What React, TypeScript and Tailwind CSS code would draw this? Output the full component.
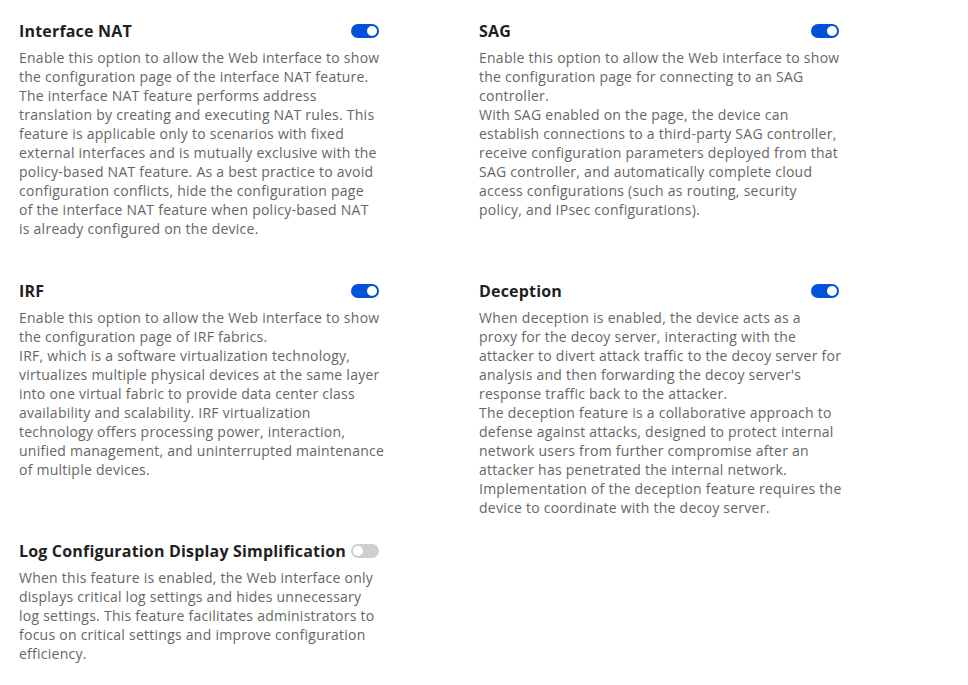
import { useState } from 'react';

type Feature = {
  id: string;
  title: string;
  enabled: boolean;
  lines: string[];
};

const features: Feature[] = [
  {
    id: 'nat',
    title: 'Interface NAT',
    enabled: true,
    lines: [
      'Enable this option to allow the Web interface to show',
      'the configuration page of the interface NAT feature.',
      'The interface NAT feature performs address',
      'translation by creating and executing NAT rules. This',
      'feature is applicable only to scenarios with fixed',
      'external interfaces and is mutually exclusive with the',
      'policy-based NAT feature. As a best practice to avoid',
      'configuration conflicts, hide the configuration page',
      'of the interface NAT feature when policy-based NAT',
      'is already configured on the device.'
    ]
  },
  {
    id: 'sag',
    title: 'SAG',
    enabled: true,
    lines: [
      'Enable this option to allow the Web interface to show',
      'the configuration page for connecting to an SAG',
      'controller.',
      'With SAG enabled on the page, the device can',
      'establish connections to a third-party SAG controller,',
      'receive configuration parameters deployed from that',
      'SAG controller, and automatically complete cloud',
      'access configurations (such as routing, security',
      'policy, and IPsec configurations).'
    ]
  },
  {
    id: 'irf',
    title: 'IRF',
    enabled: true,
    lines: [
      'Enable this option to allow the Web interface to show',
      'the configuration page of IRF fabrics.',
      'IRF, which is a software virtualization technology,',
      'virtualizes multiple physical devices at the same layer',
      'into one virtual fabric to provide data center class',
      'availability and scalability. IRF virtualization',
      'technology offers processing power, interaction,',
      'unified management, and uninterrupted maintenance',
      'of multiple devices.'
    ]
  },
  {
    id: 'deception',
    title: 'Deception',
    enabled: true,
    lines: [
      'When deception is enabled, the device acts as a',
      'proxy for the decoy server, interacting with the',
      'attacker to divert attack traffic to the decoy server for',
      "analysis and then forwarding the decoy server's",
      'response traffic back to the attacker.',
      'The deception feature is a collaborative approach to',
      'defense against attacks, designed to protect internal',
      'network users from further compromise after an',
      'attacker has penetrated the internal network.',
      'Implementation of the deception feature requires the',
      'device to coordinate with the decoy server.'
    ]
  },
  {
    id: 'log',
    title: 'Log Configuration Display Simplification',
    enabled: false,
    lines: [
      'When this feature is enabled, the Web interface only',
      'displays critical log settings and hides unnecessary',
      'log settings. This feature facilitates administrators to',
      'focus on critical settings and improve configuration',
      'efficiency.'
    ]
  }
];

function Toggle({ checked, onChange }: { checked: boolean; onChange: () => void }) {
  return (
    <button
      type="button"
      onClick={onChange}
      className={`relative inline-flex h-[14px] w-[28px] shrink-0 items-center rounded-full transition ${checked ? 'bg-[#0052d9]' : 'bg-[#cfcfcf]'}`}
    >
      <span className={`absolute top-[2px] h-[10px] w-[10px] rounded-full bg-white transition-all ${checked ? 'left-[16px]' : 'left-[2px]'}`} />
    </button>
  );
}

export default function App() {
  const [state, setState] = useState<Record<string, boolean>>(
    Object.fromEntries(features.map((f) => [f.id, f.enabled]))
  );

  return (
    <main className="min-h-screen bg-white pb-4 pl-[19px] pt-[20px] font-['Open_Sans',sans-serif]">
      <div className="grid grid-cols-[360px_360px] grid-rows-[236px_236px_auto] gap-x-[100px] gap-y-[24px]">
        {features.map((feature) => (
          <section key={feature.id}>
            <div className="flex h-[22px] items-center justify-between">
              <h2 className="whitespace-nowrap text-[16px] font-bold leading-[22px] tracking-[0.18px] text-[#1f1f1f]">{feature.title}</h2>
              <Toggle checked={state[feature.id]} onChange={() => setState((s) => ({ ...s, [feature.id]: !s[feature.id] }))} />
            </div>
            <div className="mt-[6px] text-[14px] leading-[19px] tracking-[0.25px] text-[#666666]">
              {feature.lines.map((line, i) => (
                <p key={i} className="whitespace-nowrap">{line}</p>
              ))}
            </div>
          </section>
        ))}
      </div>
    </main>
  );
}
